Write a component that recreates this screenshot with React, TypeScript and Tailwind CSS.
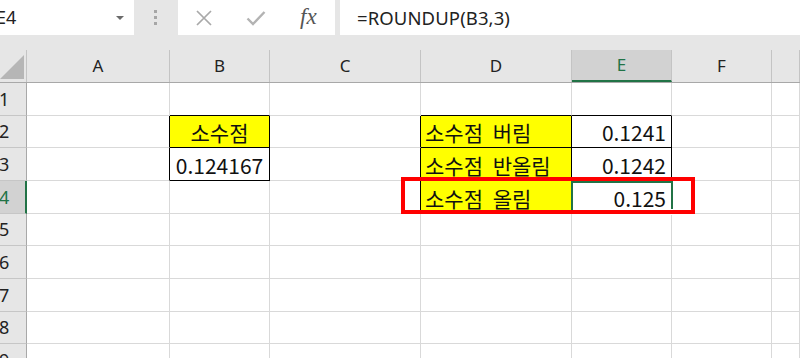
import React from "react";

const COLS = [
  { key: "A", w: "w-[143px]" },
  { key: "B", w: "w-[100px]" },
  { key: "C", w: "w-[151px]" },
  { key: "D", w: "w-[151px]" },
  { key: "E", w: "w-[100px]" },
  { key: "F", w: "w-[100px]" },
  { key: "G", w: "w-[28px]" },
];

const BORDERED = new Set(["B2", "B3", "D2", "D3", "D4", "E2", "E3", "E4"]);
const YELLOW = new Set(["B2", "D2", "D3", "D4"]);

type CellData = { text: string; align: "left" | "center" | "right" };
const DATA: Record<string, CellData> = {
  B2: { text: "소수점", align: "center" },
  B3: { text: "0.124167", align: "center" },
  D2: { text: "소수점 버림", align: "left" },
  D3: { text: "소수점 반올림", align: "left" },
  D4: { text: "소수점 올림", align: "left" },
  E2: { text: "0.1241", align: "right" },
  E3: { text: "0.1242", align: "right" },
  E4: { text: "0.125", align: "right" },
};

const colLetter = (i: number) => COLS[i]?.key;
const isB = (r: number, c: number) => {
  const l = colLetter(c);
  return l ? BORDERED.has(`${l}${r}`) : false;
};

function Cell({ r, c }: { r: number; c: number }) {
  const id = `${COLS[c].key}${r}`;
  const right = isB(r, c) || isB(r, c + 1);
  const bottom = isB(r, c) || isB(r + 1, c);
  const d = DATA[id];
  const align =
    d?.align === "left"
      ? "justify-start pl-[4px]"
      : d?.align === "right"
      ? "justify-end pr-[5px]"
      : "justify-center";
  return (
    <div
      className={`${COLS[c].w} h-full shrink-0 flex items-center pt-[3px] border-r border-b ${
        right ? "border-r-black" : "border-r-[#d9d9d9]"
      } ${bottom ? "border-b-black" : "border-b-[#d9d9d9]"} ${
        YELLOW.has(id) ? "bg-[#ffff00]" : "bg-white"
      } ${align}`}
    >
      {d && (
        <span className="text-[21px] leading-none text-[#111] whitespace-pre [word-spacing:5px]">
          {d.text}
        </span>
      )}
    </div>
  );
}

export default function App() {
  const rows = [1, 2, 3, 4, 5, 6, 7, 8, 9];
  return (
    <div
      className="relative w-[800px] h-[358px] overflow-hidden bg-[#e6e6e6]"
      style={{ fontFamily: '"Noto Sans CJK KR", "Noto Sans", sans-serif' }}
    >
      {/* formula bar */}
      <div className="flex h-[35px] items-stretch" style={{ fontFamily: '"Noto Sans", "Noto Sans CJK KR", sans-serif' }}>
        <div className="w-[134px] bg-white flex items-center justify-between pl-[0px] pr-[10px]">
          <span className="text-[18px] text-[#222] ml-[-4px]">E4</span>
          <svg width="8" height="5" viewBox="0 0 8 5" className="mt-[1px]">
            <path d="M0 0h8L4 4z" fill="#6a6a6a" />
          </svg>
        </div>
        <div className="w-[44px] flex items-center justify-center">
          <div className="flex flex-col gap-[3px] ml-[-2px]">
            <span className="w-[3px] h-[3px] bg-[#a6a6a6]" />
            <span className="w-[3px] h-[3px] bg-[#a6a6a6]" />
            <span className="w-[3px] h-[3px] bg-[#a6a6a6]" />
          </div>
        </div>
        <div className="w-[157px] bg-white flex items-center">
          <svg width="18" height="16" viewBox="0 0 18 16" className="ml-[17px]">
            <path d="M2 1L16 15M16 1L2 15" stroke="#a9a9a9" strokeWidth="1.7" fill="none" />
          </svg>
          <svg width="20" height="16" viewBox="0 0 20 16" className="ml-[33px]">
            <path d="M1.5 8.5L7 14L18.5 2" stroke="#b3b3b3" strokeWidth="2.4" fill="none" />
          </svg>
          <span
            className="ml-[34px] text-[23px] italic text-[#555] leading-none mt-[-2px]"
            style={{ fontFamily: '"Liberation Serif", serif' }}
          >
            fx
          </span>
        </div>
        <div className="w-[5px]" />
        <div className="flex-1 bg-white flex items-center pl-[17px]">
          <span className="text-[18.5px] text-[#222] tracking-[0.1px]">=ROUNDUP(B3,3)</span>
        </div>
      </div>
      <div className="h-[15px]" />
      {/* column headers */}
      <div className="flex h-[33px] border-b border-[#a8a8a8]" style={{ fontFamily: '"Noto Sans", sans-serif' }}>
        <div className="w-[27px] shrink-0 relative border-r border-[#c4c4c4]">
          <svg width="25" height="26" viewBox="0 0 25 26" className="absolute left-0 bottom-[2px]">
            <path d="M24 1V25H0z" fill="#b6b6b6" />
          </svg>
        </div>
        {COLS.map((c) => (
          <div
            key={c.key}
            className={`${c.w} shrink-0 flex items-center justify-center border-r border-[#c4c4c4] text-[17px] ${
              c.key === "E"
                ? "bg-[#d2d2d2] text-[#217346] border-b-2 border-b-[#217346]"
                : "text-[#222]"
            }`}
          >
            {c.key === "G" ? "" : c.key}
          </div>
        ))}
      </div>
      {/* rows */}
      {rows.map((r) => (
        <div key={r} className="flex h-[32.67px]">
          <div
            className={`w-[27px] shrink-0 flex items-center pt-[1px] border-b border-b-[#c6c6c6] text-[18px] ${
              r === 4
                ? "bg-[#d2d2d2] text-[#217346] border-r-2 border-r-[#217346]"
                : "bg-[#e6e6e6] text-[#222] border-r border-r-[#a8a8a8]"
            }`}
            style={{ fontFamily: '"Noto Sans", sans-serif' }}
          >
            <span className="ml-[-1px]">{r}</span>
          </div>
          {COLS.map((c, ci) => (
            <Cell key={c.key} r={r} c={ci} />
          ))}
        </div>
      ))}
      {/* selection E4 */}
      <div className="absolute left-[571px] top-[181px] w-[102px] h-[33px] border-2 border-[#217346]" />
      <div className="absolute left-[668px] top-[209px] w-[6px] h-[6px] bg-[#217346] border border-white" />
      {/* red highlight box */}
      <div className="absolute left-[401px] top-[177px] w-[294px] h-[37px] border-4 border-[#ff0000]" />
    </div>
  );
}
